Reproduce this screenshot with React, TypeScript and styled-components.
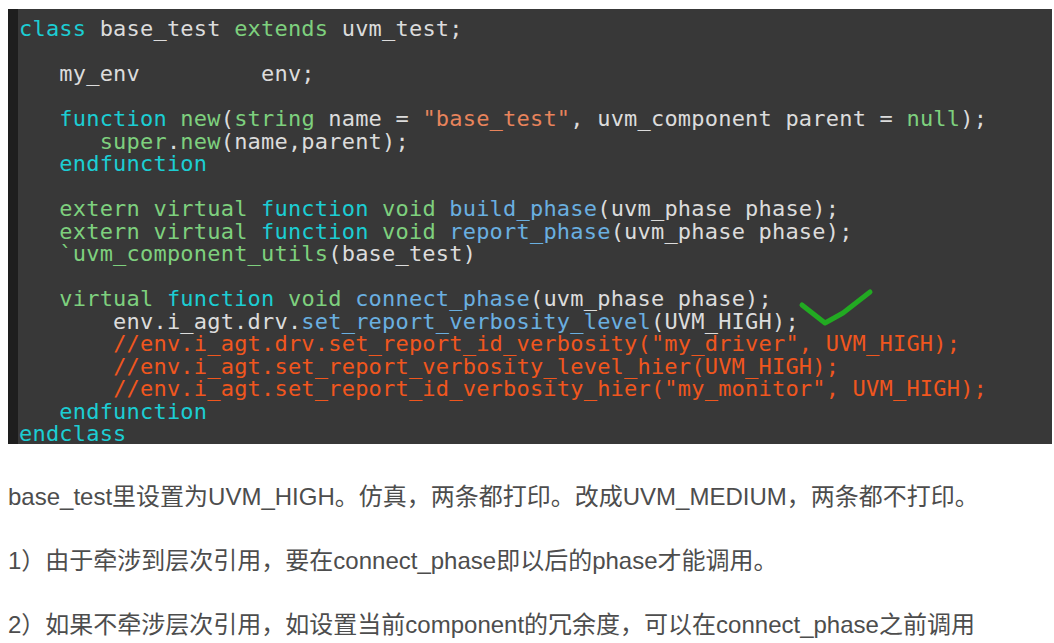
import React from "react";
import styled, { createGlobalStyle } from "styled-components";

const GlobalStyle = createGlobalStyle`
  html, body {
    margin: 0;
    padding: 0;
    background: #ffffff;
  }
`;

const Page = styled.div`
  display: flex;
  flex-direction: column;
  padding: 9px 2px 0 8px;
  gap: 35px;
`;

const CodeBlock = styled.div`
  position: relative;
  background: #383838;
  border-left: 10px solid #1e1e1e;
  padding: 9px 0 0 1px;
  height: 426px;
  font-family: "DejaVu Sans Mono", "Liberation Mono", monospace;
  font-size: 22px;
  letter-spacing: 0.2px;
  color: #dcdcdc;
`;

const CodeLine = styled.div`
  height: 22.5px;
  line-height: 22px;
  white-space: pre;
`;

type Kind = "kw" | "type" | "fn" | "str" | "cmt" | "txt";

const colors: Record<Kind, string> = {
  kw: "#1ccdd3",
  type: "#7ed07e",
  fn: "#6aafe0",
  str: "#e8845c",
  cmt: "#f0561e",
  txt: "#dcdcdc",
};

const Tok = styled.span<{ $k: Kind }>`
  color: ${(p) => colors[p.$k]};
`;

const Check = styled.svg`
  position: absolute;
  left: 772px;
  top: 276px;
  width: 90px;
  height: 45px;
`;

const Paragraphs = styled.div`
  display: flex;
  flex-direction: column;
  gap: 28px;
`;

const P = styled.p`
  margin: 0;
  font-family: "Liberation Sans", Arial, "Noto Sans CJK SC", sans-serif;
  font-size: 24px;
  line-height: 36px;
  color: #4d4d4d;
  white-space: nowrap;
`;

type Seg = [Kind, string];

const lines: Seg[][] = [
  [["kw", "class"], ["txt", " base_test "], ["type", "extends"], ["txt", " uvm_test;"]],
  [],
  [["txt", "   my_env         env;"]],
  [],
  [
    ["txt", "   "],
    ["kw", "function"],
    ["txt", " "],
    ["type", "new"],
    ["txt", "("],
    ["type", "string"],
    ["txt", " name = "],
    ["str", "\"base_test\""],
    ["txt", ", uvm_component parent = "],
    ["type", "null"],
    ["txt", ");"],
  ],
  [["txt", "      "], ["type", "super"], ["txt", "."], ["type", "new"], ["txt", "(name,parent);"]],
  [["txt", "   "], ["kw", "endfunction"]],
  [],
  [
    ["txt", "   "],
    ["type", "extern virtual"],
    ["txt", " "],
    ["kw", "function"],
    ["txt", " "],
    ["type", "void"],
    ["txt", " "],
    ["fn", "build_phase"],
    ["txt", "(uvm_phase phase);"],
  ],
  [
    ["txt", "   "],
    ["type", "extern virtual"],
    ["txt", " "],
    ["kw", "function"],
    ["txt", " "],
    ["type", "void"],
    ["txt", " "],
    ["fn", "report_phase"],
    ["txt", "(uvm_phase phase);"],
  ],
  [["txt", "   "], ["type", "`uvm_component_utils"], ["txt", "(base_test)"]],
  [],
  [
    ["txt", "   "],
    ["type", "virtual"],
    ["txt", " "],
    ["kw", "function"],
    ["txt", " "],
    ["type", "void"],
    ["txt", " "],
    ["fn", "connect_phase"],
    ["txt", "(uvm_phase phase);"],
  ],
  [["txt", "       env.i_agt.drv."], ["fn", "set_report_verbosity_level"], ["txt", "(UVM_HIGH);"]],
  [["txt", "       "], ["cmt", "//env.i_agt.drv.set_report_id_verbosity(\"my_driver\", UVM_HIGH);"]],
  [["txt", "       "], ["cmt", "//env.i_agt.set_report_verbosity_level_hier(UVM_HIGH);"]],
  [["txt", "       "], ["cmt", "//env.i_agt.set_report_id_verbosity_hier(\"my_monitor\", UVM_HIGH);"]],
  [["txt", "   "], ["kw", "endfunction"]],
  [["kw", "endclass"]],
];

export default function App() {
  return (
    <>
      <GlobalStyle />
      <Page>
        <CodeBlock>
          {lines.map((segs, i) => (
            <CodeLine key={i}>
              {segs.length === 0
                ? " "
                : segs.map(([k, t], j) => (
                    <Tok key={j} $k={k}>
                      {t}
                    </Tok>
                  ))}
            </CodeLine>
          ))}
          <Check viewBox="0 0 90 45">
            <path
              d="M12 20 L35 38 L53 28 L80 7"
              fill="none"
              stroke="#22aa22"
              strokeWidth="5"
              strokeLinecap="round"
              strokeLinejoin="round"
            />
          </Check>
        </CodeBlock>
        <Paragraphs>
          <P>base_test里设置为UVM_HIGH。仿真，两条都打印。改成UVM_MEDIUM，两条都不打印。</P>
          <P>1）由于牵涉到层次引用，要在connect_phase即以后的phase才能调用。</P>
          <P>2）如果不牵涉层次引用，如设置当前component的冗余度，可以在connect_phase之前调用</P>
        </Paragraphs>
      </Page>
    </>
  );
}
